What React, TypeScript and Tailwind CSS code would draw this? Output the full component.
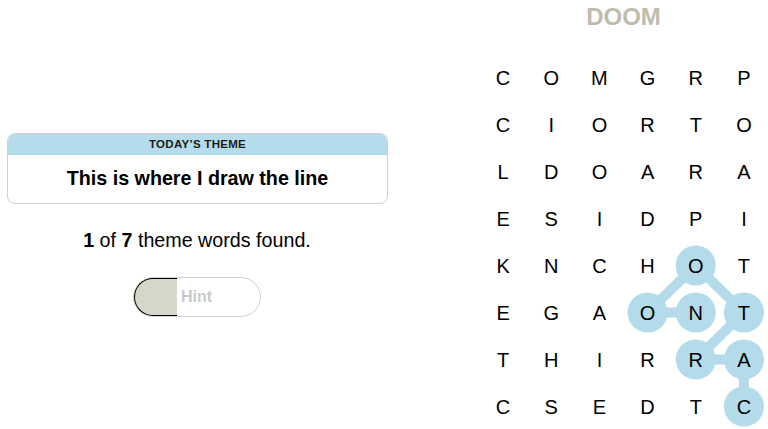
import React from "react";

const letters = [
  "COMGRP",
  "CIORTO",
  "LDOARA",
  "ESIDPI",
  "KNCHOT",
  "EGAONT",
  "THIRRA",
  "CSEDTC",
];

// selected cells (row, col) and the links between them
const picked: [number, number][] = [
  [4, 4],
  [5, 3],
  [5, 4],
  [5, 5],
  [6, 4],
  [6, 5],
  [7, 5],
];
const links: [number, number][] = [
  [0, 1],
  [1, 2],
  [0, 3],
  [3, 4],
  [4, 5],
  [5, 6],
];

const CELL_W = 289 / 6;
const CELL_H = 47;
const cx = (c: number) => CELL_W / 2 + c * CELL_W;
const cy = (r: number) => CELL_H / 2 + r * CELL_H;

const Board: React.FC = () => (
  <div className="relative w-[289px] h-[376px]">
    <svg className="absolute inset-0" width="289" height="376" viewBox="0 0 289 376">
      {links.map(([a, b], i) => (
        <line
          key={i}
          x1={cx(picked[a][1])}
          y1={cy(picked[a][0])}
          x2={cx(picked[b][1])}
          y2={cy(picked[b][0])}
          stroke="#b3dbe9"
          strokeWidth="10"
        />
      ))}
      {picked.map(([r, c], i) => (
        <circle key={i} cx={cx(c)} cy={cy(r)} r="20" fill="#b3dbe9" />
      ))}
    </svg>
    <div className="relative grid grid-cols-6">
      {letters.map((row, r) =>
        row.split("").map((ch, c) => (
          <div key={`${r}-${c}`} className="h-[47px] flex items-center justify-center text-[20px] text-black">
            {ch}
          </div>
        ))
      )}
    </div>
  </div>
);

export default function App() {
  return (
    <div className="w-[768px] h-[429px] bg-white flex overflow-hidden" style={{ fontFamily: '"Liberation Sans", Arial, sans-serif' }}>
      {/* theme + progress */}
      <div className="w-[394px] flex flex-col items-center pt-[133px]">
        <div className="w-[381px] ml-[7px] self-start rounded-lg border border-[#d1d1d1] overflow-hidden">
          <div className="h-[21px] bg-[#b5dcea] text-center text-[11.5px] leading-[21px] font-semibold tracking-wide text-[#1a1a1a]">
            TODAY’S THEME
          </div>
          <div className="h-[48px] flex items-center justify-center text-[19.7px] font-bold text-black">
            This is where I draw the line
          </div>
        </div>
        <p className="mt-[23px] text-[19.7px] leading-[26px] text-black">
          <span className="font-bold">1</span> of <span className="font-bold">7</span> theme words found.
        </p>
        <button className="mt-[24px] w-[128px] h-[40px] rounded-full border border-[#d0d0d0] flex items-stretch overflow-hidden">
          <span className="w-[44px] -my-px -ml-px bg-[#d7d7c9] border-2 border-r-0 border-black rounded-l-full" />
          <span className="pl-[4px] flex items-center text-[16px] font-bold text-[#c9c9c9]">Hint</span>
        </button>
      </div>

      {/* board */}
      <div className="ml-auto w-[289px] flex flex-col items-center">
        <div className="pt-[2px] text-[24px] leading-[30px] font-bold text-[#bfbcae]">DOOM</div>
        <div className="mt-[22px]">
          <Board />
        </div>
      </div>
    </div>
  );
}
